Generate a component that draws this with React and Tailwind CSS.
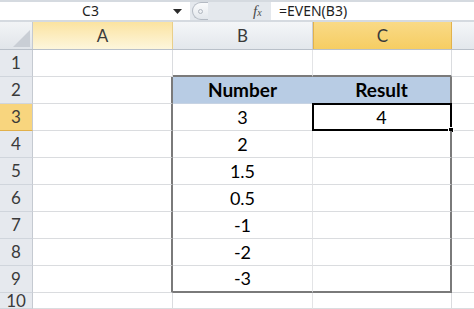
import React from 'react';

const ROWS = [
    { n: 1, b: '', c: '' },
    { n: 2, b: 'Number', c: 'Result', head: true },
    { n: 3, b: '3', c: '4' },
    { n: 4, b: '2', c: '' },
    { n: 5, b: '1.5', c: '' },
    { n: 6, b: '0.5', c: '' },
    { n: 7, b: '-1', c: '' },
    { n: 8, b: '-2', c: '' },
    { n: 9, b: '-3', c: '' },
    { n: 10, b: '', c: '' },
];

const FormulaBar = () => (
    <div className="h-[22px] flex bg-[#e4e8ed] border-t-2 border-b-2 border-[#d5dae0] font-['Noto_Sans',sans-serif] text-[14px] text-[#1e1e1e]">
        <div className="w-[190px] bg-white flex items-center">
            <span className="flex-1 text-center pl-[8px] leading-none">C3</span>
            <svg width="9" height="5" viewBox="0 0 9 5" className="mr-[8px]">
                <path d="M0 0 H9 L4.5 5 Z" fill="#2b2b2b" />
            </svg>
        </div>
        <div className="w-[81px] flex items-center">
            <div className="ml-[2px] w-[16px] h-[18px] rounded-l-full border border-r-0 border-[#b4bac3] bg-gradient-to-b from-[#fafbfc] to-[#e3e7ec] flex items-center justify-center">
                <div className="w-[5px] h-[5px] rounded-full border border-[#b0b6bf]" />
            </div>
            <span className="ml-[45px] font-['Liberation_Serif',serif] italic text-[15px] text-[#4a4a4a] leading-none">
                f<span className="text-[10px]">x</span>
            </span>
        </div>
        <div className="flex-1 bg-white flex items-center pl-[8px] leading-none">=EVEN(B3)</div>
    </div>
);

const ColHeader = () => (
    <div className="h-[28px] flex border-b border-[#b9c0c9] font-['Lato',sans-serif] text-[17px] text-[#3a3a3a]">
        <div className="w-[33px] relative bg-gradient-to-b from-[#f2f4f6] to-[#e1e5ea] border-r border-[#c5cad1]">
            <svg width="33" height="27" viewBox="0 0 33 27" className="block">
                <path d="M13 25 H30 V8 Z" fill="#c9ced5" />
            </svg>
        </div>
        <div className="w-[140px] flex items-center justify-center bg-gradient-to-b from-[#fbe3a0] to-[#fdf6dc] border-r border-[#e9cf8a]">A</div>
        <div className="w-[140px] flex items-center justify-center bg-gradient-to-b from-[#f4f6f8] to-[#e3e7ec] border-r border-[#c9ced5]">B</div>
        <div className="w-[139px] flex items-center justify-center bg-gradient-to-b from-[#f9da86] to-[#f6cd62] border-x border-[#e2b24c]">C</div>
        <div className="flex-1 bg-gradient-to-b from-[#f4f6f8] to-[#e3e7ec]" />
    </div>
);

const Row = ({ row }) => {
    const inTable = row.n >= 2 && row.n <= 9;
    const selected = row.n === 3;
    const last = row.n === 9;
    const h = row.n === 10 ? 'h-[16px]' : 'h-[27px]';

    const aBorder = inTable ? 'border-r-2 border-r-[#7a7a7a]' : 'border-r border-r-[#dadcdf]';
    const bcBottom = row.n === 1 || last ? 'border-b-2 border-b-[#7a7a7a]' : row.head ? 'border-b border-b-[#c7d3e3]' : 'border-b border-b-[#dadcdf]';
    const bRight = row.head ? 'border-r border-r-[#b8cce4]' : 'border-r border-r-[#e3e4e6]';
    const cRight = inTable ? 'border-r-2 border-r-[#7a7a7a]' : 'border-r border-r-[#dadcdf]';
    const fill = row.head ? 'bg-[#b8cce4] font-bold text-[19px]' : 'bg-white text-[18px]';

    return (
        <div className={`${h} flex font-['Lato',sans-serif] text-black`}>
            <div className={`w-[33px] flex items-center justify-center text-[17px] border-r border-r-[#c5cad1] ${selected ? 'bg-[#f8d57e] text-[#3a3a3a] border-b border-b-[#e1b04a]' : 'bg-[#e6e9ee] text-[#3a3a3a] border-b border-b-[#d0d5dc]'}`}>
                {row.n}
            </div>
            <div className={`w-[140px] bg-white border-b border-b-[#dadcdf] ${aBorder}`} />
            <div className={`w-[140px] flex items-center justify-center ${fill} ${bcBottom} ${bRight}`}>{row.b}</div>
            <div className={`w-[139px] relative flex items-center justify-center ${fill} ${bcBottom} ${cRight}`}>
                {row.c}
                {selected && (
                    <div className="absolute top-[-1px] left-[-1px] right-[-2px] bottom-[-1px] border-2 border-black pointer-events-none">
                        <div className="absolute right-[-4px] bottom-[-4px] w-[6px] h-[6px] bg-black border border-white" />
                    </div>
                )}
            </div>
            <div className="flex-1 bg-white border-b border-b-[#dadcdf]" />
        </div>
    );
};

export default function App() {
    return (
        <div className="w-[474px] h-[309px] overflow-hidden bg-white flex flex-col">
            <FormulaBar />
            <ColHeader />
            {ROWS.map((row) => (
                <Row key={row.n} row={row} />
            ))}
        </div>
    );
}
